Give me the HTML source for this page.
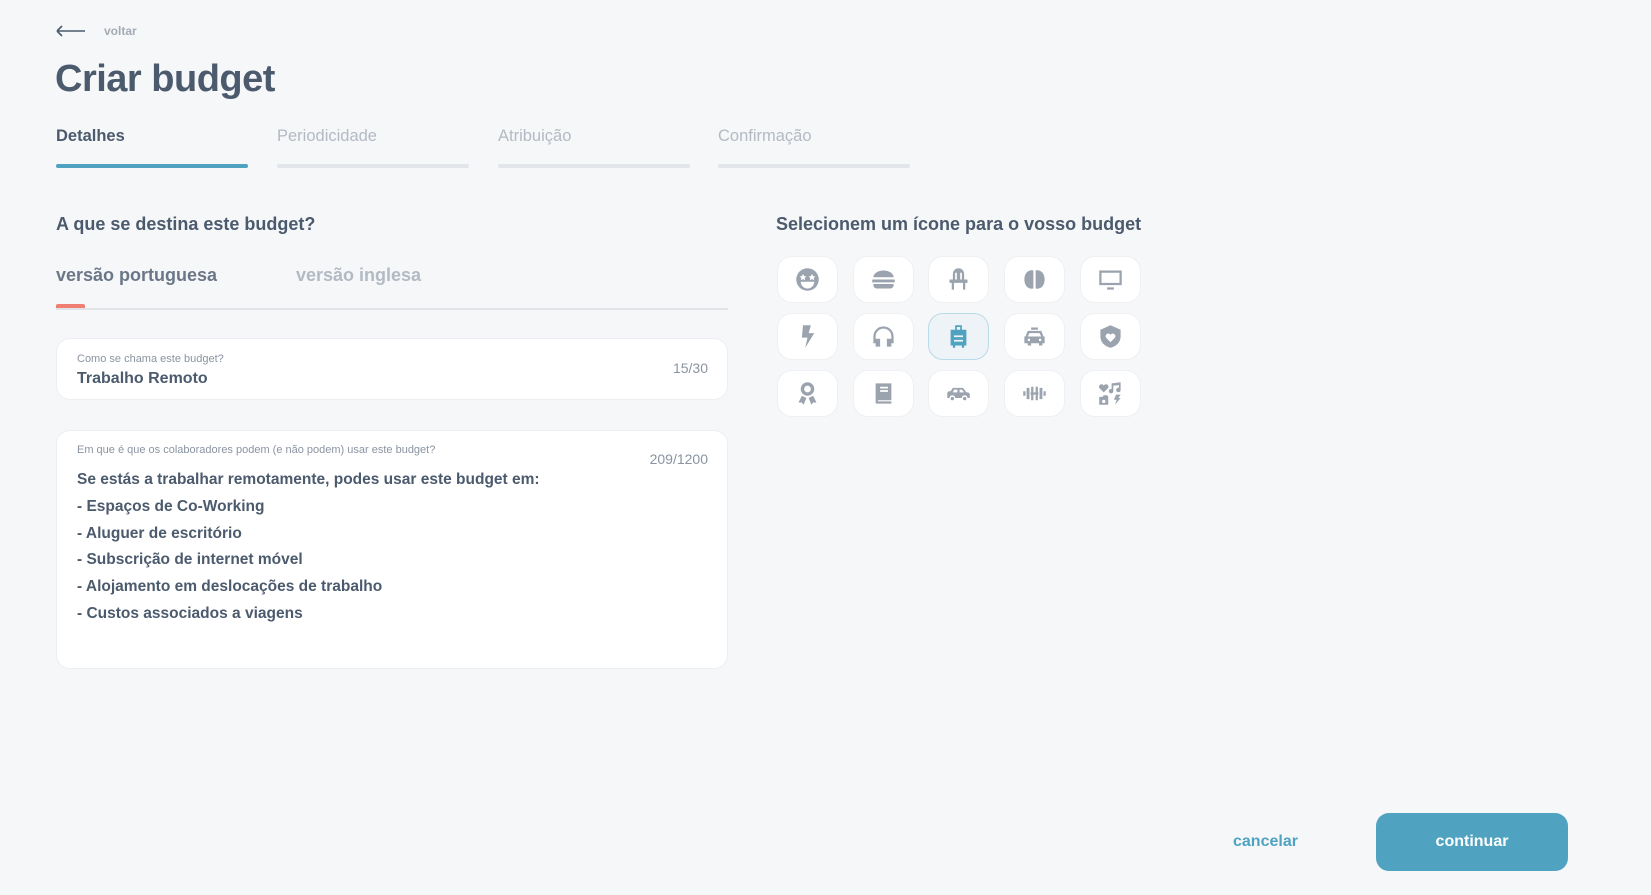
<!DOCTYPE html>
<html><head><meta charset="utf-8"><style>
*{box-sizing:border-box;margin:0;padding:0}
body{width:1651px;height:895px;background:#f6f7f9;font-family:"Liberation Sans",sans-serif;color:#4b5a6d;position:relative;overflow:hidden}
.a{position:absolute}
.tab{position:absolute;top:127px;font-size:16.5px;color:#b3bac4}
.bar{position:absolute;top:164px;width:192px;height:4px;border-radius:2px;background:#e2e5ea}
.box{position:absolute;left:56px;width:672px;background:#fff;border:1px solid #eceef1;border-radius:14px}
.tile{position:absolute;width:61px;height:47px;background:#fff;border:1px solid #eef0f3;border-radius:15px;display:flex;align-items:center;justify-content:center}
.tile svg{width:27px;height:27px;fill:#9aa3ae}
.sel{background:#edf3f7;border-color:#b9dbe7}
.sel svg{fill:#4fa3c1}
.ln{font-size:15.5px;font-weight:bold;color:#4b5a6d;line-height:26.8px}
</style></head><body>
<svg class="a" style="left:56px;top:25px" width="30" height="12" viewBox="0 0 30 12"><path d="M1 6H29M1 6L6 1M1 6L6 11" stroke="#4b5a6d" stroke-width="1.6" fill="none"/></svg>
<div class="a" style="left:104px;top:24px;font-size:12px;color:#a3abb5;font-weight:bold">voltar</div>
<div class="a" style="left:55px;top:58px;font-size:38px;font-weight:bold;color:#4b5a6d;letter-spacing:-0.5px">Criar budget</div>
<div class="tab" style="left:56px;color:#4b5a6d;font-weight:bold">Detalhes</div>
<div class="tab" style="left:277px">Periodicidade</div>
<div class="tab" style="left:498px">Atribuição</div>
<div class="tab" style="left:718px">Confirmação</div>
<div class="bar" style="left:56px;background:#4fa3c1"></div>
<div class="bar" style="left:277px"></div>
<div class="bar" style="left:498px"></div>
<div class="bar" style="left:718px"></div>
<div class="a" style="left:56px;top:214px;font-size:18px;font-weight:bold">A que se destina este budget?</div>
<div class="a" style="left:776px;top:214px;font-size:18px;font-weight:bold">Selecionem um ícone para o vosso budget</div>
<div class="a" style="left:56px;top:265px;font-size:18px;font-weight:bold;color:#6b7787">versão portuguesa</div>
<div class="a" style="left:296px;top:265px;font-size:18px;font-weight:bold;color:#b3bac4">versão inglesa</div>
<div class="a" style="left:56px;top:308px;width:672px;height:2px;background:#e0e3e8"></div>
<div class="a" style="left:56px;top:304px;width:29px;height:4px;border-radius:2px 2px 0 0;background:#f07e72"></div>
<div class="box" style="top:338px;height:62px">
<div class="a" style="left:20px;top:14px;font-size:11px;color:#8a94a1">Como se chama este budget?</div>
<div class="a" style="left:20px;top:31px;font-size:16px;font-weight:bold">Trabalho Remoto</div>
<div class="a" style="right:19px;top:21px;font-size:14px;color:#8a94a1">15/30</div>
</div>
<div class="box" style="top:430px;height:239px">
<div class="a" style="left:20px;top:13px;font-size:11px;color:#8a94a1">Em que é que os colaboradores podem (e não podem) usar este budget?</div>
<div class="a" style="right:19px;top:20px;font-size:14px;color:#8a94a1">209/1200</div>
<div class="a" style="left:20px;top:36px">
<div class="ln">Se estás a trabalhar remotamente, podes usar este budget em:</div>
<div class="ln">- Espaços de Co-Working</div>
<div class="ln">- Aluguer de escritório</div>
<div class="ln">- Subscrição de internet móvel</div>
<div class="ln">- Alojamento em deslocações de trabalho</div>
<div class="ln">- Custos associados a viagens</div>
</div></div>

<div class="tile" style="left:777px;top:256px"><svg viewBox="0 0 24 24"><path d="M12 2a10 10 0 1 0 0 20 10 10 0 0 0 0-20zM6 14h12a6 6 0 0 1-12 0zM8 7l1 2 2 .3-1.5 1.4.4 2-1.9-1-1.9 1 .4-2L5 9.3 7 9zm8 0l1 2 2 .3-1.5 1.4.4 2-1.9-1-1.9 1 .4-2L13 9.3 15 9z"/></svg></div>
<div class="tile" style="left:853px;top:256px"><svg viewBox="0 0 24 24"><path d="M3 10a9 6 0 0 1 18 0zM2 12h20v2.5H2zM3 16h18v1a3 3 0 0 1-3 3H6a3 3 0 0 1-3-3z"/></svg></div>
<div class="tile" style="left:928px;top:256px"><svg viewBox="0 0 24 24"><path d="M7 12V7a5 5 0 0 1 10 0v5h-2V6h-1.5v6h-3V6H9v6zM4 12h16v3h-2v6h-2v-6H8v6H6v-6H4z"/></svg></div>
<div class="tile" style="left:1004px;top:256px"><svg viewBox="0 0 24 24"><path d="M11 4C7 3 3 6 3 12s4 9 8 8zM13 4c4-1 8 2 8 8s-4 9-8 8z"/></svg></div>
<div class="tile" style="left:1080px;top:256px"><svg viewBox="0 0 24 24"><path d="M2 4h20v13H2zm2 2v9h16V6zM9 19h6v2H9z"/></svg></div>

<div class="tile" style="left:777px;top:313px"><svg viewBox="0 0 24 24"><path d="M8 2h7l-2 7h5L10 22l2-9H7z"/></svg></div>
<div class="tile" style="left:853px;top:313px"><svg viewBox="0 0 24 24"><path d="M12 3a9 9 0 0 0-9 9v6h2v-6a7 7 0 0 1 14 0v6h2v-6a9 9 0 0 0-9-9zM5 14h4v7H5zm10 0h4v7h-4z"/></svg></div>
<div class="tile sel" style="left:928px;top:313px"><svg viewBox="0 0 24 24"><path d="M9 2h6v4h-1.5V3.5h-3V6H9zM5 6h14v14H5zm3 5v1.5h8V11zm0 4v1.5h8V15zM7 20h2v2H7zm8 0h2v2h-2z"/></svg></div>
<div class="tile" style="left:1004px;top:313px"><svg viewBox="0 0 24 24"><path d="M9 4h6v2H9zM6 7h12l2 5h1v6h-2v2h-3v-2H9v2H6v-2H3v-6h1zm1.5 2L6 12h12l-1.5-3zM6 14v2h2v-2zm10 0v2h2v-2z"/></svg></div>
<div class="tile" style="left:1080px;top:313px"><svg viewBox="0 0 24 24"><path d="M12 2l9 4v6c0 5-4 9-9 10-5-1-9-5-9-10V6zm0 15l4-4a2.3 2.3 0 0 0-4-2.5A2.3 2.3 0 0 0 8 13z"/></svg></div>

<div class="tile" style="left:777px;top:370px"><svg viewBox="0 0 24 24"><path d="M12 2a6 6 0 1 0 0 12 6 6 0 0 0 0-12zm0 3a3 3 0 1 1 0 6 3 3 0 0 1 0-6zM7 14l-3 6h3l1.5 2L11 16zm10 0l3 6h-3l-1.5 2L13 16z"/></svg></div>
<div class="tile" style="left:853px;top:370px"><svg viewBox="0 0 24 24"><path d="M5 3h14v15H7v1h12v2H6a1 1 0 0 1-1-1zm4 3v1.5h7V6zm0 3v1.5h7V9z"/></svg></div>
<div class="tile" style="left:928px;top:370px"><svg viewBox="0 0 24 24"><path d="M7 7h9l3 4h1a2 2 0 0 1 2 2v3h-2a2.5 2.5 0 0 0-5 0H9a2.5 2.5 0 0 0-5 0H2v-4a2 2 0 0 1 2-2h1zm1 1.5L7 11h4V8.5zm5 0V11h4l-2-2.5zM6.5 15a1.5 1.5 0 1 1 0 3 1.5 1.5 0 0 1 0-3zm11 0a1.5 1.5 0 1 1 0 3 1.5 1.5 0 0 1 0-3z"/></svg></div>
<div class="tile" style="left:1004px;top:370px"><svg viewBox="0 0 24 24"><path d="M2 10h2v4H2zm3-3h2.5v10H5zm3.5 4h7v2h-7zM16.5 7H19v10h-2.5zM20 10h2v4h-2zM9 6h2v12H9zm4 0h2v12h-2z"/></svg></div>
<div class="tile" style="left:1080px;top:370px"><svg viewBox="0 0 24 24"><path d="M6 11L2 7a2.2 2.2 0 0 1 4-2 2.2 2.2 0 0 1 4 2zM13 3l8-1v7a2 2 0 1 1-1.5-2V4.5L14.5 5v5a2 2 0 1 1-1.5-2zM2 15h3l1-1.5h3l1 1.5v7H2zm4 2.5a1.5 1.5 0 1 0 0 3 1.5 1.5 0 0 0 0-3zM17 13h4l-2 3h2l-5 6 1.5-4.5H15z"/></svg></div>

<div class="a" style="left:1233px;top:833px;font-size:16px;font-weight:bold;color:#4fa3c1">cancelar</div>
<div class="a" style="left:1376px;top:813px;width:192px;height:58px;border-radius:13px;background:#4fa3c1;color:#fff;font-size:16px;font-weight:bold;display:flex;align-items:center;justify-content:center">continuar</div>
</body></html>
